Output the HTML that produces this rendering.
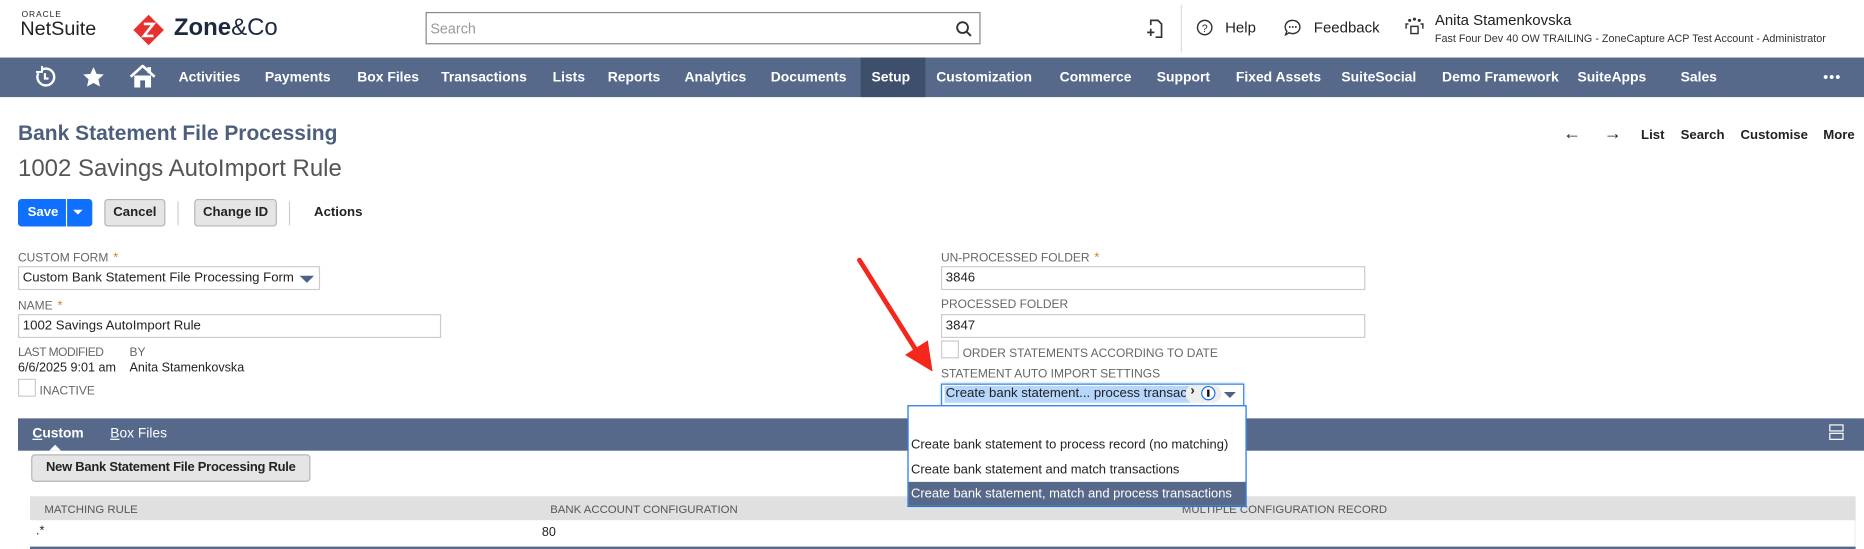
<!DOCTYPE html>
<html><head><meta charset="utf-8"><style>
html,body{margin:0;padding:0;width:1864px;height:548px;overflow:hidden;background:#fff}
#w{position:absolute;left:0;top:0;width:1555px;height:457.2px;transform:scale(1.19871);transform-origin:0 0;font-family:"Liberation Sans",Arial,sans-serif;color:#222}
.a{position:absolute;white-space:nowrap}
.nav{position:absolute;left:0;top:48px;width:1555px;height:33px;background:#56698b}
.nav span{position:absolute;top:0;line-height:33px;color:#fff;font-weight:bold;font-size:11.6px;white-space:nowrap}
.lbl{font-size:10px;color:#666;text-transform:uppercase}
.req{color:#d58512;font-size:11px;margin-left:4px}
.inp{position:absolute;border:1px solid #ccc;background:#fff;font-size:11px;line-height:18px;padding-left:3px;box-sizing:border-box;white-space:nowrap;overflow:hidden}
.btn{position:absolute;background:#e5e5e5;border:1px solid #b5b5b5;border-radius:3px;font-size:11px;font-weight:bold;text-align:center;line-height:21px;box-sizing:border-box;white-space:nowrap}
.cb{position:absolute;width:13px;height:13px;border:1px solid #ccc;background:#fff}
</style></head><body><div id="w">
<!-- header -->
<div class="a" style="left:18px;top:9px;font-size:7px;letter-spacing:0.8px;color:#222">ORACLE</div>
<div class="a" style="left:17px;top:15px;font-size:16.5px;color:#222">NetSuite</div>
<svg class="a" style="left:110px;top:11px" width="28" height="28" viewBox="0 0 28 28"><rect x="5" y="5" width="18" height="18" transform="rotate(45 14 14)" fill="#e8312f"/><path d="M10 9h8l-8 10h8" stroke="#fff" stroke-width="2.2" fill="none"/></svg>
<div class="a" style="left:145px;top:12px;font-size:20px;color:#1c2a3f"><b>Zone</b><span style="font-weight:normal">&amp;Co</span></div>
<div class="a" style="left:355px;top:10px;width:463px;height:27px;border:1px solid #888;box-sizing:border-box"><span style="position:absolute;left:3px;top:6px;font-size:12px;color:#999">Search</span>
<svg style="position:absolute;right:6px;top:6px" width="14" height="14" viewBox="0 0 14 14"><circle cx="6" cy="6" r="4.5" stroke="#333" stroke-width="1.6" fill="none"/><path d="M9.3 9.3l3.7 3.7" stroke="#333" stroke-width="1.6"/></svg></div>
<svg class="a" style="left:955px;top:15px" width="16" height="17" viewBox="0 0 16 17"><path d="M5 6V2h6l3 3v11H9" stroke="#333" stroke-width="1.4" fill="none"/><path d="M5 9v6M2 12h6" stroke="#333" stroke-width="1.4"/></svg>
<div class="a" style="left:985px;top:4px;width:1px;height:40px;background:#ddd"></div>
<svg class="a" style="left:998px;top:16px" width="14" height="14" viewBox="0 0 14 14"><circle cx="7" cy="7" r="6" stroke="#333" stroke-width="1.2" fill="none"/><text x="7" y="10.5" font-size="9" text-anchor="middle" font-family="Liberation Sans" fill="#333">?</text></svg>
<div class="a" style="left:1022px;top:16px;font-size:12.5px">Help</div>
<svg class="a" style="left:1071px;top:16px" width="15" height="14" viewBox="0 0 15 14"><path d="M7.5 1a6 5.5 0 1 1-3 10.3L1.5 13l1-3A6 5.5 0 0 1 7.5 1z" stroke="#333" stroke-width="1.2" fill="none"/><circle cx="5" cy="6.5" r=".8" fill="#333"/><circle cx="7.5" cy="6.5" r=".8" fill="#333"/><circle cx="10" cy="6.5" r=".8" fill="#333"/></svg>
<div class="a" style="left:1096px;top:16px;font-size:12.5px">Feedback</div>
<svg class="a" style="left:1172px;top:14px" width="16" height="16" viewBox="0 0 16 16"><circle cx="4" cy="3" r="1.3" fill="#333"/><circle cx="8" cy="2" r="1.3" fill="#333"/><circle cx="12" cy="3" r="1.3" fill="#333"/><rect x="5" y="8" width="6" height="6" stroke="#333" stroke-width="1.2" fill="none"/><path d="M3 6H1v4M13 6h2v4" stroke="#333" stroke-width="1.2" fill="none"/></svg>
<div class="a" style="left:1197px;top:10px;font-size:12.5px">Anita Stamenkovska</div>
<div class="a" style="left:1197px;top:27px;font-size:9px;color:#333">Fast Four Dev 40 OW TRAILING - ZoneCapture ACP Test Account - Administrator</div>
<!-- nav -->
<div class="nav">
<svg style="position:absolute;left:28px;top:7px" width="19" height="19" viewBox="0 0 19 19"><path d="M4 6a7 7 0 1 0 3-3" stroke="#fff" stroke-width="2" fill="none"/><path d="M7 0v5H2" stroke="#fff" stroke-width="1.6" fill="none"/><path d="M9.5 6v4.5h3" stroke="#fff" stroke-width="1.8" fill="none"/></svg>
<svg style="position:absolute;left:69px;top:8px" width="18" height="17" viewBox="0 0 18 17"><path d="M9 0l2.6 5.6 6 .6-4.5 4 1.3 6L9 13.2 3.6 16.2l1.3-6-4.5-4 6-.6z" fill="#fff"/></svg>
<svg style="position:absolute;left:108px;top:6px" width="22" height="20" viewBox="0 0 22 20"><path d="M1 10L11 1l10 9" stroke="#fff" stroke-width="2.2" fill="none"/><path d="M4 9v10h5v-6h4v6h5V9" fill="#fff"/><rect x="15" y="2" width="3" height="5" fill="#fff"/></svg>
<span style="left:149px">Activities</span><span style="left:221px">Payments</span><span style="left:298px">Box Files</span><span style="left:368px">Transactions</span><span style="left:461px">Lists</span><span style="left:507px">Reports</span><span style="left:571px">Analytics</span><span style="left:643px">Documents</span>
<div style="position:absolute;left:718px;top:0;width:54px;height:33px;background:#3e4f6c"></div><span style="left:727px">Setup</span>
<span style="left:781px">Customization</span><span style="left:884px">Commerce</span><span style="left:965px">Support</span><span style="left:1031px">Fixed Assets</span><span style="left:1119px">SuiteSocial</span><span style="left:1203px">Demo Framework</span><span style="left:1316px">SuiteApps</span><span style="left:1402px">Sales</span><span style="left:1521px;letter-spacing:1px">•••</span>
</div>
<!-- titles -->
<div class="a" style="left:15px;top:101px;font-size:17.5px;font-weight:bold;color:#4d5f7c">Bank Statement File Processing</div>
<div class="a" style="left:15px;top:130px;font-size:20px;color:#555">1002 Savings AutoImport Rule</div>
<div class="a" style="left:1304px;top:103px;font-size:15px;font-weight:bold">←</div>
<div class="a" style="left:1338px;top:103px;font-size:15px;font-weight:bold">→</div>
<div class="a" style="left:1369px;top:107px;font-size:11px;font-weight:bold">List</div>
<div class="a" style="left:1402px;top:107px;font-size:11px;font-weight:bold">Search</div>
<div class="a" style="left:1452px;top:107px;font-size:11px;font-weight:bold">Customise</div>
<div class="a" style="left:1521px;top:107px;font-size:11px;font-weight:bold">More</div>
<!-- buttons -->
<div class="a" style="left:15px;top:166px;width:62px;height:23px;background:#0f6fff;border-radius:3px"></div>
<div class="a" style="left:23px;top:171px;font-size:11px;font-weight:bold;color:#fff">Save</div>
<div class="a" style="left:55px;top:166px;width:1px;height:23px;background:#fff"></div>
<div class="a" style="left:61px;top:175px;border-left:4px solid transparent;border-right:4px solid transparent;border-top:4px solid #fff"></div>
<div class="btn" style="left:87px;top:166px;width:51px;height:23px">Cancel</div>
<div class="a" style="left:148px;top:168px;width:1px;height:20px;background:#ccc"></div>
<div class="btn" style="left:162px;top:166px;width:69px;height:23px">Change ID</div>
<div class="a" style="left:241px;top:168px;width:1px;height:20px;background:#ccc"></div>
<div class="a" style="left:262px;top:171px;font-size:11px;font-weight:bold">Actions</div>
<!-- left fields -->
<div class="a lbl" style="left:15px;top:209px">Custom Form<span class="req">*</span></div>
<div class="inp" style="left:15px;top:222px;width:252px;height:20px">Custom Bank Statement File Processing Form</div>
<div class="a" style="left:250px;top:230px;border-left:6px solid transparent;border-right:6px solid transparent;border-top:6px solid #4d6386"></div>
<div class="a lbl" style="left:15px;top:249px">Name<span class="req">*</span></div>
<div class="inp" style="left:15px;top:262px;width:353px;height:20px">1002 Savings AutoImport Rule</div>
<div class="a lbl" style="left:15px;top:289px;letter-spacing:-0.4px">Last Modified</div>
<div class="a lbl" style="left:108px;top:289px">By</div>
<div class="a" style="left:15px;top:301px;font-size:10.5px">6/6/2025 9:01 am</div>
<div class="a" style="left:108px;top:301px;font-size:10.5px">Anita Stamenkovska</div>
<div class="cb" style="left:15px;top:316px"></div>
<div class="a lbl" style="left:33px;top:321px">Inactive</div>
<!-- right fields -->
<div class="a lbl" style="left:785px;top:209px">Un-Processed Folder<span class="req">*</span></div>
<div class="inp" style="left:785px;top:222px;width:354px;height:20px">3846</div>
<div class="a lbl" style="left:785px;top:249px">Processed Folder</div>
<div class="inp" style="left:785px;top:262px;width:354px;height:20px">3847</div>
<div class="cb" style="left:785px;top:284px"></div>
<div class="a lbl" style="left:803px;top:290px">Order statements according to date</div>
<div class="a lbl" style="left:785px;top:307px">Statement Auto Import Settings</div>
<div class="a" style="left:785px;top:320px;width:253px;height:19px;border:1px solid #3d87e0;box-sizing:border-box;box-shadow:0 0 2px #7ab0ef"></div>
<div class="a" style="left:788px;top:322px;width:205px;height:14px;background:#b6d6fb"></div>
<div class="a" style="left:789px;top:322px;font-size:11px;width:203px;overflow:hidden">Create bank statement... process transactions</div>
<div class="a" style="left:989px;top:321px;width:30px;height:15px;background:#eee;border-radius:8px"></div>
<div class="a" style="left:993px;top:320px;font-size:11px;font-weight:bold">›</div>
<div class="a" style="left:1002px;top:322px;width:10px;height:10px;border:1.5px solid #1a73e8;border-radius:50%;background:#fff"></div>
<div class="a" style="left:1007px;top:325px;width:1.5px;height:6px;background:#111"></div>
<div class="a" style="left:1021px;top:327px;border-left:5px solid transparent;border-right:5px solid transparent;border-top:5px solid #4d6386"></div>
<!-- tab band -->
<div class="a" style="left:15px;top:349px;width:1540px;height:27px;background:#56698b"></div>
<div class="a" style="left:27px;top:356px;font-size:11.5px;font-weight:bold;color:#fff"><u>C</u>ustom</div>
<div class="a" style="left:92px;top:356px;font-size:11.5px;color:#fff"><u>B</u>ox Files</div>
<div class="a" style="left:41px;top:371px;border-left:5px solid transparent;border-right:5px solid transparent;border-bottom:5px solid #fff"></div>
<div class="a" style="left:1526px;top:354px;width:12px;height:6px;border:1.5px solid #fff;box-sizing:border-box"></div>
<div class="a" style="left:1526px;top:361px;width:12px;height:6px;border:1.5px solid #fff;box-sizing:border-box"></div>
<div class="btn" style="left:26px;top:379px;width:233px;height:23px;font-size:10.8px;letter-spacing:-0.2px">New Bank Statement File Processing Rule</div>
<!-- table -->
<div class="a" style="left:25px;top:414px;width:1523px;height:20px;background:#e0e0e0"></div>
<div class="a" style="left:37px;top:420px;font-size:9.5px;color:#555">MATCHING RULE</div>
<div class="a" style="left:459px;top:420px;font-size:9.5px;color:#555">BANK ACCOUNT CONFIGURATION</div>
<div class="a" style="left:986px;top:420px;font-size:9.5px;color:#555">MULTIPLE CONFIGURATION RECORD</div>
<div class="a" style="left:1547px;top:434px;width:1px;height:22px;background:#eee"></div>
<div class="a" style="left:30px;top:437px;font-size:10.5px">.*</div>
<div class="a" style="left:452px;top:438px;font-size:10.5px">80</div>
<div class="a" style="left:25px;top:456px;width:1523px;height:2px;background:#56698b"></div>
<!-- dropdown list -->
<div class="a" style="left:757px;top:338px;width:283px;height:85px;background:#fff;border:1px solid #1a73e8;box-sizing:border-box"></div>
<div class="a" style="left:760px;top:365px;font-size:10.8px">Create bank statement to process record (no matching)</div>
<div class="a" style="left:760px;top:386px;font-size:10.8px">Create bank statement and match transactions</div>
<div class="a" style="left:758px;top:402px;width:281px;height:20px;background:#56698b"></div>
<div class="a" style="left:760px;top:406px;font-size:10.8px;color:#fff">Create bank statement, match and process transactions</div>
<!-- arrow -->
<svg class="a" style="left:700px;top:200px" width="100" height="120" viewBox="0 0 100 120"><path d="M17 17L66 95" stroke="#f4271c" stroke-width="4" stroke-linecap="round"/><path d="M78 110L55 96L74 84z" fill="#f4271c"/></svg>
</div></body></html>
